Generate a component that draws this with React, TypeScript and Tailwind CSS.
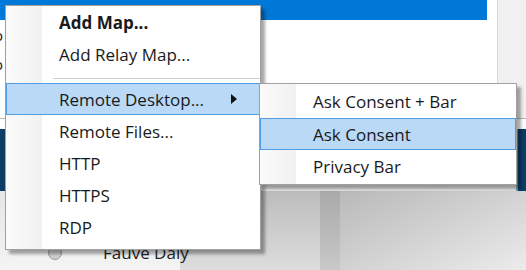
import React from 'react';

const font = { fontFamily: '"Open Sans", "Noto Sans", sans-serif' };

const MenuItem: React.FC<{ label: string; bold?: boolean; active?: boolean; sub?: boolean; tall?: boolean }> = ({
  label,
  bold,
  active,
  sub,
  tall,
}) => (
  <div
    className={`relative flex ${tall ? 'h-[33px]' : 'h-[32px]'} items-center pl-[52px] pr-3 text-[17px] leading-none text-[#1a1a1a] ${
      active ? 'border border-[#4f9ee3] bg-[#b9d9f6]' : 'border border-transparent'
    } ${bold ? 'font-bold' : ''}`}
  >
    <span className="flex-1">{label}</span>
    {sub && (
      <svg width="8" height="10" viewBox="0 0 8 10" className="mr-[9px]">
        <path d="M1 0 L7 5 L1 10 Z" fill="#111" />
      </svg>
    )}
  </div>
);

export default function App() {
  return (
    <div className="relative h-[270px] w-[526px] overflow-hidden bg-white" style={font}>
      {/* background window */}
      <div className="flex h-[118px]">
        <div className="flex flex-1 flex-col">
          <div className="h-[20px] w-[487px] bg-[#0078d7]" />
          <div className="flex-1 bg-white text-[15px] text-[#222]">
            <div className="mt-[4px] -ml-[6px]">o</div>
            <div className="mt-[6px] -ml-[6px]">o</div>
          </div>
        </div>
        <div className="w-[29px] border-l border-[#d8d8d8] bg-[#f0f0f0]" />
      </div>
      <div className="h-px bg-[#b8b8b8]" />
      <div className="h-[10px] bg-white" />
      <div className="flex h-[62px] bg-[#e8e8e8]">
        <div className="w-[8px] bg-[#0b3d66]" />
        <div className="flex-1" />
        <div className="w-[10px] border-l-2 border-[#7f9cb6] bg-[#0b3d66]" />
      </div>
      <div className="flex h-[80px]">
        <div className="w-[180px] bg-gradient-to-b from-[#e6e6e6] to-[#f4f4f4]" />
        <div className="w-[140px] bg-gradient-to-b from-[#bcbcbc] to-[#dedede]" />
        <div className="w-[20px] bg-gradient-to-b from-[#a9a9a9] to-[#c9c9c9]" />
        <div className="flex-1 bg-gradient-to-br from-[#b9b9b9] to-[#ececec]" />
      </div>
      <div className="absolute left-[48px] top-[246px] h-[14px] w-[14px] rounded-full border border-[#999] bg-[#cfcfcf]" />
      <div className="absolute left-[103px] top-[240px] text-[17px] text-[#222]">Fauve Daly</div>

      {/* main context menu */}
      <div className="absolute left-[5px] top-[5px] w-[256px] border border-[#a0a0a0] bg-white pb-[6px] pt-0 shadow-[4px_4px_3px_rgba(0,0,0,0.35)]">
        <div className="absolute bottom-0 left-0 top-0 w-[36px] bg-gradient-to-r from-[#fbfbfb] to-[#f1f1f1]" />
        <div className="relative">
          <MenuItem label="Add Map..." bold />
          <MenuItem label="Add Relay Map..." />
          <div className="h-[13px] pl-[47px] pt-[8px]">
            <div className="h-px bg-[#cfcfcf]" />
          </div>
          <MenuItem label="Remote Desktop..." active sub />
          <MenuItem label="Remote Files..." />
          <MenuItem label="HTTP" />
          <MenuItem label="HTTPS" />
          <MenuItem label="RDP" />
        </div>
      </div>

      {/* submenu */}
      <div className="absolute left-[259px] top-[83px] w-[258px] border border-[#a0a0a0] bg-white py-[1px] shadow-[4px_4px_3px_rgba(0,0,0,0.35)]">
        <div className="absolute bottom-0 left-0 top-0 w-[36px] bg-gradient-to-r from-[#fbfbfb] to-[#f1f1f1]" />
        <div className="relative">
          <MenuItem label="Ask Consent + Bar" tall />
          <MenuItem label="Ask Consent" active />
          <MenuItem label="Privacy Bar" tall />
        </div>
      </div>
    </div>
  );
}
